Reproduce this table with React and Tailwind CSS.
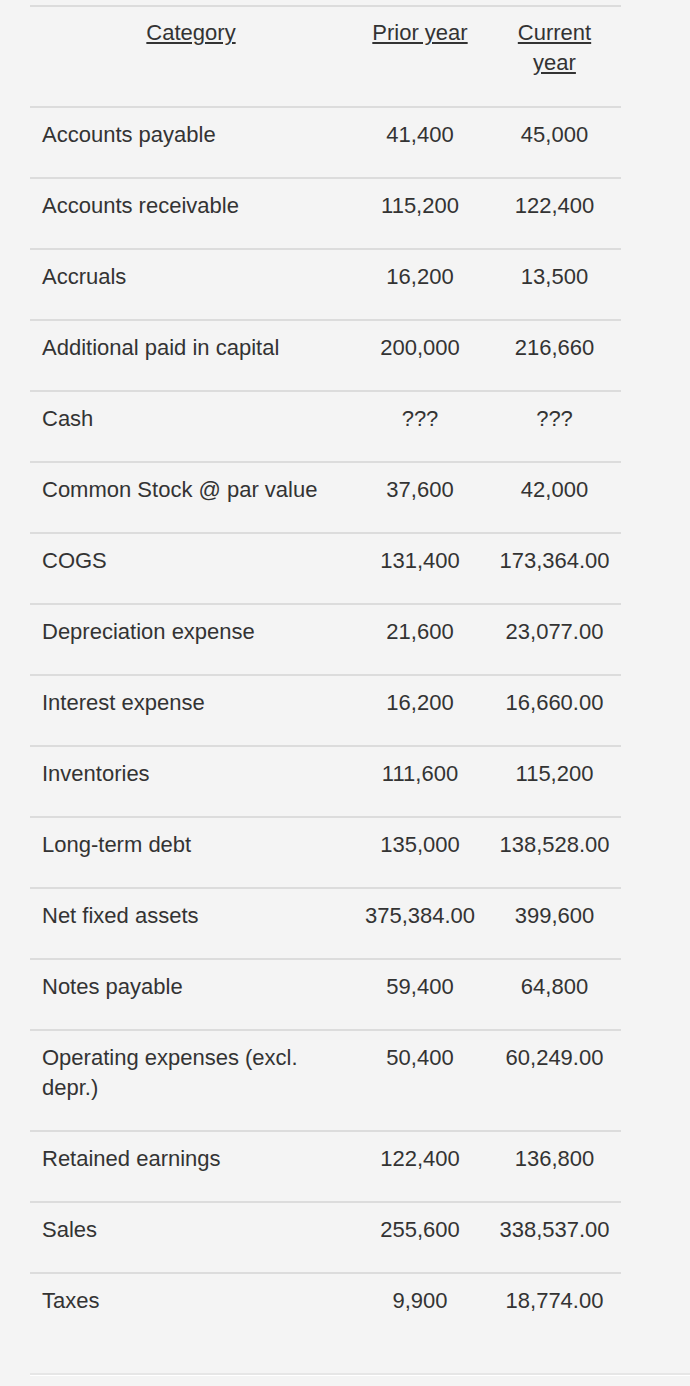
const rows = [
  ['Accounts payable', '41,400', '45,000'],
  ['Accounts receivable', '115,200', '122,400'],
  ['Accruals', '16,200', '13,500'],
  ['Additional paid in capital', '200,000', '216,660'],
  ['Cash', '???', '???'],
  ['Common Stock @ par value', '37,600', '42,000'],
  ['COGS', '131,400', '173,364.00'],
  ['Depreciation expense', '21,600', '23,077.00'],
  ['Interest expense', '16,200', '16,660.00'],
  ['Inventories', '111,600', '115,200'],
  ['Long-term debt', '135,000', '138,528.00'],
  ['Net fixed assets', '375,384.00', '399,600'],
  ['Notes payable', '59,400', '64,800'],
  ['Operating expenses (excl. depr.)', '50,400', '60,249.00'],
  ['Retained earnings', '122,400', '136,800'],
  ['Sales', '255,600', '338,537.00'],
  ['Taxes', '9,900', '18,774.00'],
];

function App() {
  return (
    <div
      className="min-h-[1386px] w-[690px] bg-[#f4f4f4] pt-[5px] text-[22px] leading-[30px] text-[#333333]"
      style={{ fontFamily: '"Liberation Sans", Arial, sans-serif' }}
    >
      <table className="ml-[30px] w-[591px] table-fixed border-collapse">
        <colgroup>
          <col className="w-[322px]" />
          <col className="w-[136px]" />
          <col className="w-[133px]" />
        </colgroup>
        <thead>
          <tr className="border-t-2 border-b-2 border-[#dcdcdc]">
            <th className="px-3 pt-[11px] pb-[28px] text-center align-top font-normal">
              <span className="underline underline-offset-2">Category</span>
            </th>
            <th className="px-2 pt-[11px] pb-[28px] text-center align-top font-normal">
              <span className="underline underline-offset-2">Prior year</span>
            </th>
            <th className="px-3 pt-[11px] pb-[28px] text-center align-top font-normal">
              <span className="underline underline-offset-2">Current year</span>
            </th>
          </tr>
        </thead>
        <tbody>
          {rows.map(([name, prior, current], i) => (
            <tr
              key={name}
              className={i < rows.length - 1 ? 'border-b-2 border-[#dcdcdc]' : ''}
            >
              <td className="pl-[12px] pr-3 pt-[12px] pb-[27px] align-top">{name}</td>
              <td className="px-1 pt-[12px] pb-[27px] text-center align-top whitespace-nowrap">{prior}</td>
              <td className="px-1 pt-[12px] pb-[27px] text-center align-top whitespace-nowrap">{current}</td>
            </tr>
          ))}
        </tbody>
      </table>
      <div className="ml-[30px] mt-[30px] h-[2px] bg-[#e6e6e6]" />
      <div className="ml-[30px] h-[1px] bg-white" />
    </div>
  );
}

export default App;
